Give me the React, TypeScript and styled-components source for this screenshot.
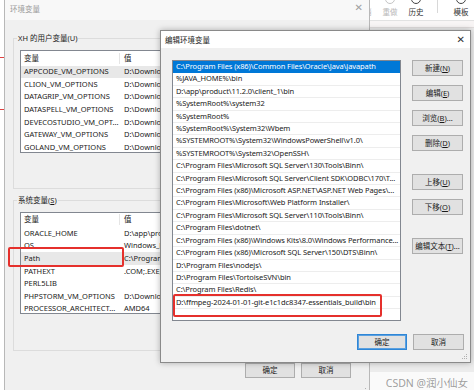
import React from "react";
import styled, { createGlobalStyle } from "styled-components";

const FONT = `"Noto Sans", "Noto Sans CJK SC", sans-serif`;

const Global = createGlobalStyle`
  html, body { margin: 0; padding: 0; background: #fff; }
  #root { width: 474px; height: 390px; }
  * { box-sizing: border-box; }
`;

const Desktop = styled.div`
  position: relative;
  width: 474px;
  height: 390px;
  overflow: hidden;
  background: #fff;
  font-family: ${FONT};
  font-size: 7.5px;
  color: #1a1a1a;
`;

/* ---------- background application (top right) ---------- */
const HostApp = styled.div`
  position: absolute;
  left: 330px;
  top: 0;
  width: 144px;
  height: 390px;
  display: flex;
  flex-direction: column;
  background: #ececec;
`;
const HostToolbar = styled.div`
  height: 21px;
  flex-shrink: 0;
  display: flex;
  padding-left: 21px;
  background: #fff;
  border-bottom: 1px solid #e2e2e2;
`;
const ToolItem = styled.div<{ $disabled?: boolean }>`
  width: 30px;
  display: flex;
  flex-direction: column;
  align-items: center;
  color: ${(p) => (p.$disabled ? "#b8b8b8" : "#333")};
  svg { margin-top: -7px; }
`;
const ToolLabel = styled.span`
  margin-top: 2px;
  line-height: 10px;
  white-space: nowrap;
`;
const ToolSep = styled.div`
  width: 1px;
  height: 13px;
  background: #d8d8d8;
  margin: 0 10px 0 8px;
`;
const HostStripe = styled.div`
  height: 7px;
  background: #f8f5f5;
  border-bottom: 1px solid #e0dcdc;
`;
const HostBody = styled.div`
  flex: 1;
  background: #ececec;
`;
const HostFooter = styled.div`
  height: 18px;
  background: #fafafa;
`;

const Watermark = styled.div`
  position: absolute;
  right: 6px;
  bottom: 0px;
  font-size: 10.5px;
  line-height: 14px;
  color: rgba(140, 140, 140, 0.85);
  z-index: 5;
  white-space: nowrap;
`;

const RedTick = styled.div<{ $top: number }>`
  position: absolute;
  left: 0;
  top: ${(p) => p.$top}px;
  width: 4px;
  height: 1px;
  background: #e04040;
`;

/* ---------- main dialog: 环境变量 ---------- */
const MainWin = styled.div`
  position: absolute;
  left: 4px;
  top: -4px;
  width: 366px;
  height: 400px;
  z-index: 1;
  display: flex;
  flex-direction: column;
  background: #f0f0f0;
  border-left: 1px solid #b8b8b8;
  border-right: 1px solid #b8b8b8;
`;
const MainTitle = styled.div`
  height: 24px;
  flex-shrink: 0;
  display: flex;
  align-items: center;
  justify-content: space-between;
  padding: 0 6px 0 5px;
  color: #9a9a9a;
  background: #f8f8f8;
`;
const CloseX = styled.span<{ $dark?: boolean }>`
  font-size: 10px;
  line-height: 10px;
  color: ${(p) => (p.$dark ? "#333" : "#a0a0a0")};
  font-family: "DejaVu Sans", sans-serif;
`;
const MainBody = styled.div`
  flex: 1;
  display: flex;
  flex-direction: column;
  padding: 12.5px 8px 0 8px;
`;
const Group = styled.fieldset<{ $gap?: number }>`
  margin: ${(p) => p.$gap ?? 0}px 0 0 0;
  padding: 0 6px 0 6px;
  border: 1px solid #dcdcdc;
  min-width: 0;
`;
const GroupLabel = styled.legend`
  margin-left: -3px;
  padding: 0 1px;
  line-height: 11px;
`;
const ListBox = styled.div<{ $h: number; $mt: number }>`
  margin-top: ${(p) => p.$mt}px;
  height: ${(p) => p.$h}px;
  background: #fff;
  border: 1px solid #828790;
  overflow: hidden;
`;
const ListHeader = styled.div`
  display: grid;
  grid-template-columns: 99px 40px;
  height: 14.5px;
  align-items: center;
`;
const HeaderCell = styled.div<{ $first?: boolean }>`
  padding-left: ${(p) => (p.$first ? 3 : 4)}px;
  line-height: 11px;
  border-right: ${(p) => (p.$first ? "1px solid #e5e5e5" : "none")};
`;
const VarRow = styled.div<{ $sel?: boolean }>`
  display: grid;
  grid-template-columns: 99px 40px;
  height: 12.6px;
  align-items: center;
  background: ${(p) => (p.$sel ? "#e8e8e8" : "transparent")};
`;
const Cell = styled.div<{ $first?: boolean }>`
  padding-left: ${(p) => (p.$first ? 3 : 4)}px;
  white-space: nowrap;
  overflow: hidden;
  line-height: 11px;
`;
const GroupSpacer = styled.div<{ $h: number }>`
  height: ${(p) => p.$h}px;
`;
const MainFooter = styled.div`
  display: flex;
  justify-content: flex-end;
  gap: 6px;
  margin-top: 12px;
  padding-right: 10px;
`;
const WinButton = styled.div<{ $primary?: boolean; $w?: number; $h?: number }>`
  width: ${(p) => p.$w ?? 50}px;
  height: ${(p) => p.$h ?? 16}px;
  flex-shrink: 0;
  display: flex;
  align-items: center;
  justify-content: center;
  background: #e1e1e1;
  border: 1px solid ${(p) => (p.$primary ? "#2f86d6" : "#adadad")};
  box-shadow: ${(p) => (p.$primary ? "inset 0 0 0 1px #5aa0e0" : "none")};
  color: #1a1a1a;
  white-space: nowrap;
  line-height: 10px;
  u { text-decoration-thickness: 0.5px; text-underline-offset: 1px; }
`;
const Grip = styled.svg`
  position: absolute;
  right: 2px;
  bottom: 2px;
`;

/* ---------- edit dialog: 编辑环境变量 ---------- */
const EditWin = styled.div`
  position: absolute;
  left: 160px;
  top: 30px;
  width: 311px;
  height: 333px;
  z-index: 3;
  display: flex;
  flex-direction: column;
  background: #f0f0f0;
  border: 1px solid #8a8a8a;
  box-shadow: 0 0 6px rgba(0, 0, 0, 0.28);
`;
const EditTitle = styled.div`
  height: 17px;
  flex-shrink: 0;
  display: flex;
  align-items: center;
  justify-content: space-between;
  padding: 0 5px 0 4px;
  background: #fff;
  color: #1a1a1a;
`;
const EditMain = styled.div`
  display: flex;
  padding: 12px 0 0 11px;
`;
const PathList = styled.div`
  width: 229px;
  height: 261px;
  background: #fff;
  border: 1px solid #828790;
  overflow: hidden;
`;
const PathRow = styled.div<{ $sel?: boolean }>`
  height: 12.42px;
  padding-left: 3px;
  line-height: 11px;
  letter-spacing: -0.1px;
  white-space: nowrap;
  overflow: hidden;
  background: ${(p) => (p.$sel ? "#0078d7" : "#fff")};
  color: ${(p) => (p.$sel ? "#fff" : "#1a1a1a")};
  border-bottom: 1px solid ${(p) => (p.$sel ? "#0078d7" : "#ededed")};
`;
const SideButtons = styled.div`
  margin-left: 11px;
  display: flex;
  flex-direction: column;
  gap: 9px;
`;
const SideButton = styled(WinButton)<{ $push?: boolean }>`
  margin-top: ${(p) => (p.$push ? 14 : 0)}px;
`;
const EditFooter = styled.div`
  display: flex;
  justify-content: flex-end;
  gap: 6px;
  margin-top: 13px;
  padding-right: 6px;
`;

const RedBox = styled.div<{ $l: number; $t: number; $w: number; $h: number }>`
  position: absolute;
  left: ${(p) => p.$l}px;
  top: ${(p) => p.$t}px;
  width: ${(p) => p.$w}px;
  height: ${(p) => p.$h}px;
  border: 2px solid #e5302c;
  border-radius: 2px;
  z-index: 4;
`;

const userVars: [string, string][] = [
  ["APPCODE_VM_OPTIONS", "D:\\Downloads\\JetBrains"],
  ["CLION_VM_OPTIONS", "D:\\Downloads\\JetBrains"],
  ["DATAGRIP_VM_OPTIONS", "D:\\Downloads\\JetBrains"],
  ["DATASPELL_VM_OPTIONS", "D:\\Downloads\\JetBrains"],
  ["DEVECOSTUDIO_VM_OPT...", "D:\\Downloads\\JetBrains"],
  ["GATEWAY_VM_OPTIONS", "D:\\Downloads\\JetBrains"],
  ["GOLAND_VM_OPTIONS", "D:\\Downloads\\JetBrains"],
];

const sysVars: [string, string][] = [
  ["ORACLE_HOME", "D:\\app\\product\\11.2.0"],
  ["OS", "Windows_NT"],
  ["Path", "C:\\Program Files (x86)"],
  ["PATHEXT", ".COM;.EXE;.BAT;.CMD"],
  ["PERL5LIB", ""],
  ["PHPSTORM_VM_OPTIONS", "D:\\Downloads\\JetBrains"],
  ["PROCESSOR_ARCHITECT...", "AMD64"],
];

const paths = [
  "C:\\Program Files (x86)\\Common Files\\Oracle\\Java\\javapath",
  "%JAVA_HOME%\\bin",
  "D:\\app\\product\\11.2.0\\client_1\\bin",
  "%SystemRoot%\\system32",
  "%SystemRoot%",
  "%SystemRoot%\\System32\\Wbem",
  "%SYSTEMROOT%\\System32\\WindowsPowerShell\\v1.0\\",
  "%SYSTEMROOT%\\System32\\OpenSSH\\",
  "C:\\Program Files\\Microsoft SQL Server\\130\\Tools\\Binn\\",
  "C:\\Program Files\\Microsoft SQL Server\\Client SDK\\ODBC\\170\\T...",
  "C:\\Program Files (x86)\\Microsoft ASP.NET\\ASP.NET Web Pages\\...",
  "C:\\Program Files\\Microsoft\\Web Platform Installer\\",
  "C:\\Program Files\\Microsoft SQL Server\\110\\Tools\\Binn\\",
  "C:\\Program Files\\dotnet\\",
  "C:\\Program Files (x86)\\Windows Kits\\8.0\\Windows Performance...",
  "C:\\Program Files (x86)\\Microsoft SQL Server\\150\\DTS\\Binn\\",
  "D:\\Program Files\\nodejs\\",
  "D:\\Program Files\\TortoiseSVN\\bin",
  "C:\\Program Files\\Redis\\",
  "D:\\ffmpeg-2024-01-01-git-e1c1dc8347-essentials_build\\bin",
];

const GripIcon = () => (
  <Grip width="8" height="8" viewBox="0 0 8 8">
    {[
      [6, 2],
      [6, 4],
      [4, 4],
      [6, 6],
      [4, 6],
      [2, 6],
    ].map(([x, y], i) => (
      <rect key={i} x={x} y={y} width="1" height="1" fill="#b0b0b0" />
    ))}
  </Grip>
);

const RoundIcon = ({ color }: { color: string }) => (
  <svg width="12" height="12" viewBox="0 0 12 12">
    <circle cx="6" cy="6" r="4.5" fill="none" stroke={color} strokeWidth="1" />
  </svg>
);

const VarList = ({ rows, h, mt, sel }: { rows: [string, string][]; h: number; mt: number; sel: number }) => (
  <ListBox $h={h} $mt={mt}>
    <ListHeader>
      <HeaderCell $first>变量</HeaderCell>
      <HeaderCell>值</HeaderCell>
    </ListHeader>
    {rows.map(([k, v], i) => (
      <VarRow key={k} $sel={i === sel}>
        <Cell $first>{k}</Cell>
        <Cell>{v}</Cell>
      </VarRow>
    ))}
  </ListBox>
);

export default function App() {
  return (
    <Desktop>
      <Global />
      <RedTick $top={57} />
      <RedTick $top={109} />

      <HostApp>
        <HostToolbar>
          <ToolItem $disabled>
            <RoundIcon color="#bbb" />
            <ToolLabel>撤销</ToolLabel>
          </ToolItem>
          <ToolItem $disabled>
            <RoundIcon color="#c4c4c4" />
            <ToolLabel>重做</ToolLabel>
          </ToolItem>
          <ToolItem>
            <RoundIcon color="#444" />
            <ToolLabel>历史</ToolLabel>
          </ToolItem>
          <ToolSep />
          <ToolItem>
            <RoundIcon color="#444" />
            <ToolLabel>模板</ToolLabel>
          </ToolItem>
        </HostToolbar>
        <HostStripe />
        <HostBody />
        <HostFooter />
      </HostApp>

      <MainWin>
        <MainTitle>
          <span>环境变量</span>
          <CloseX>✕</CloseX>
        </MainTitle>
        <MainBody>
          <Group>
            <GroupLabel>XH 的用户变量(U)</GroupLabel>
            <VarList rows={userVars} h={103} mt={6.5} sel={0} />
            <GroupSpacer $h={35} />
          </Group>
          <Group $gap={6}>
            <GroupLabel>系统变量(<u>S</u>)</GroupLabel>
            <VarList rows={sysVars} h={102} mt={5.5} sel={2} />
            <GroupSpacer $h={36} />
          </Group>
          <MainFooter>
            <WinButton $h={15}>确定</WinButton>
            <WinButton $h={15}>取消</WinButton>
          </MainFooter>
        </MainBody>
        <GripIcon />
      </MainWin>

      <EditWin>
        <EditTitle>
          <span>编辑环境变量</span>
          <CloseX $dark>✕</CloseX>
        </EditTitle>
        <EditMain>
          <PathList>
            {paths.map((p, i) => (
              <PathRow key={p} $sel={i === 0}>
                {p}
              </PathRow>
            ))}
          </PathList>
          <SideButtons>
            <SideButton $w={51}>新建(<u>N</u>)</SideButton>
            <SideButton $w={51}>编辑(<u>E</u>)</SideButton>
            <SideButton $w={51}>浏览(<u>B</u>)...</SideButton>
            <SideButton $w={51}>删除(<u>D</u>)</SideButton>
            <SideButton $w={51} $push>上移(<u>U</u>)</SideButton>
            <SideButton $w={51}>下移(<u>O</u>)</SideButton>
            <SideButton $w={51} $push>编辑文本(<u>T</u>)...</SideButton>
          </SideButtons>
        </EditMain>
        <EditFooter>
          <WinButton $primary>确定</WinButton>
          <WinButton $w={51}>取消</WinButton>
        </EditFooter>
        <GripIcon />
      </EditWin>

      <RedBox $l={8} $t={247} $w={116} $h={20} />
      <RedBox $l={173} $t={294} $w={209} $h={23} />

      <Watermark>CSDN @润小仙女</Watermark>
    </Desktop>
  );
}
